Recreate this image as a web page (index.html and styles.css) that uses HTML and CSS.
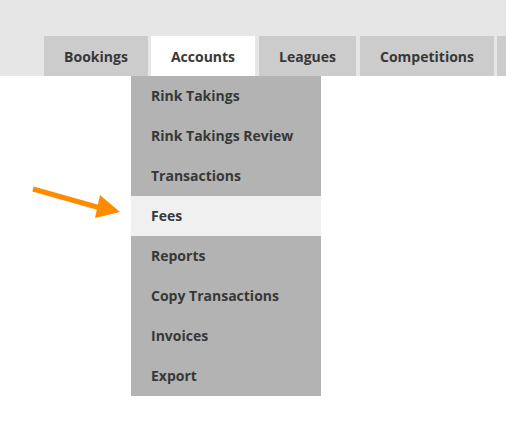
FILE: index.html
```html
<!DOCTYPE html>
<html>
<head>
<meta charset="utf-8">
<link rel="stylesheet" href="styles.css">
</head>
<body>
<header class="topbar">
  <nav class="tabs">
    <div class="tab tab-bookings">Bookings</div>
    <div class="tab tab-accounts active">Accounts</div>
    <div class="tab tab-leagues">Leagues</div>
    <div class="tab tab-comps">Competitions</div>
    <div class="tab tab-more"></div>
  </nav>
</header>
<main class="content">
  <div class="pointer">
    <svg class="arrow" width="131" height="60" viewBox="0 0 131 60">
      <line x1="33" y1="14" x2="104" y2="34" stroke="#ff8c00" stroke-width="5"/>
      <polygon points="100,20 120,37 95,43" fill="#ff8c00"/>
    </svg>
  </div>
  <div class="dropdown">
    <div class="item">Rink Takings</div>
    <div class="item">Rink Takings Review</div>
    <div class="item">Transactions</div>
    <div class="item hover">Fees</div>
    <div class="item">Reports</div>
    <div class="item">Copy Transactions</div>
    <div class="item">Invoices</div>
    <div class="item">Export</div>
  </div>
</main>
</body>
</html>
```
FILE: styles.css
```css
html, body {
  margin: 0;
  padding: 0;
  background: #ffffff;
  font-family: "Open Sans", "Liberation Sans", sans-serif;
  overflow: hidden;
}
.topbar {
  background: #e6e6e6;
  height: 76px;
  display: flex;
  align-items: flex-end;
  overflow: hidden;
}
.tabs {
  display: flex;
  margin-left: 44px;
  height: 40px;
  flex-shrink: 0;
}
.tab {
  background: #cccccc;
  color: #383838;
  font-weight: 700;
  font-size: 14px;
  height: 40px;
  display: flex;
  align-items: center;
  justify-content: center;
  flex-shrink: 0;
}
.tab.active { background: #ffffff; }
.tab-bookings { width: 104px; }
.tab-accounts { width: 104px; margin-left: 3px; }
.tab-leagues { width: 97px; margin-left: 4px; }
.tab-comps { width: 134px; margin-left: 4px; }
.tab-more { width: 20px; margin-left: 3px; }
.content {
  display: flex;
  align-items: flex-start;
}
.pointer {
  width: 131px;
  padding-top: 99px;
  flex-shrink: 0;
}
.arrow { display: block; }
.dropdown {
  width: 190px;
  background: #b3b3b3;
}
.item {
  height: 40px;
  line-height: 40px;
  padding-left: 20px;
  font-size: 14px;
  font-weight: 700;
  color: #383838;
  white-space: nowrap;
}
.item.hover { background: #f0f0f0; }
```
